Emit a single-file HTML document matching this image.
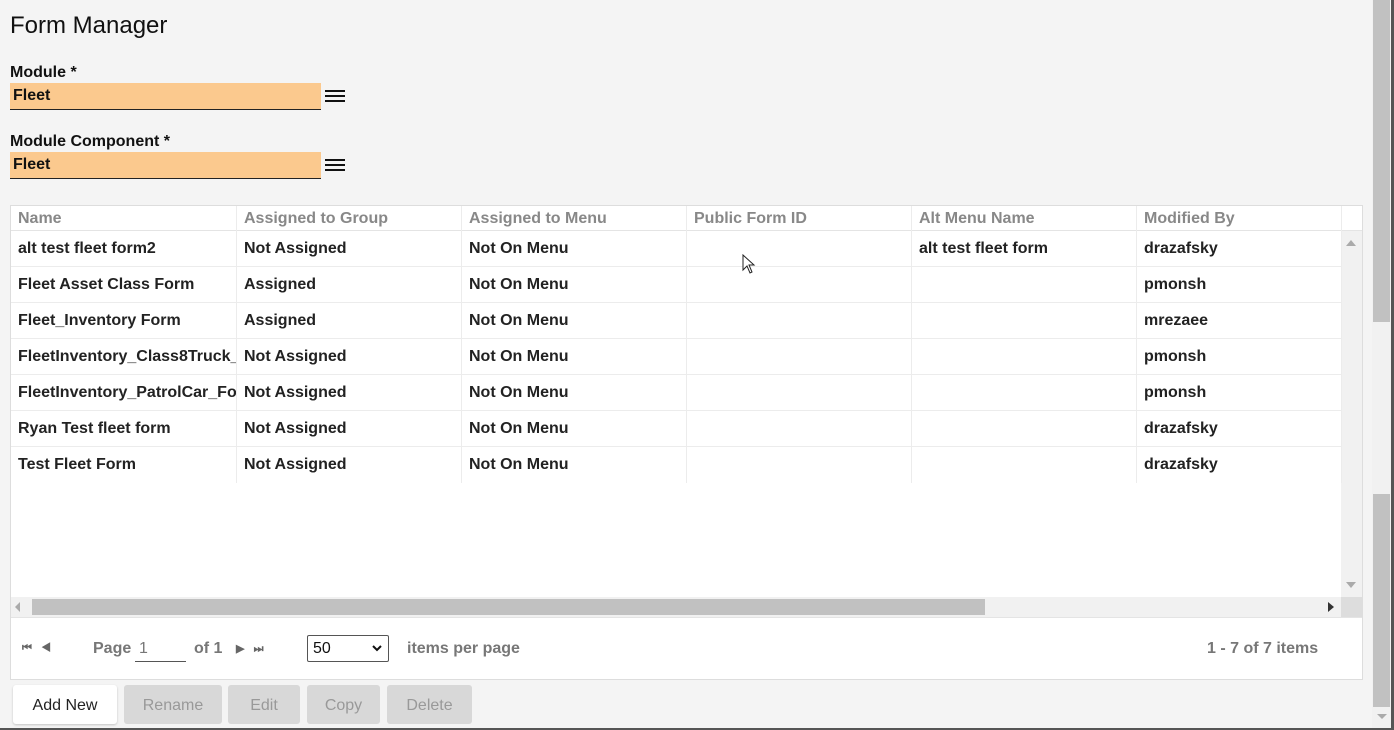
<!DOCTYPE html>
<html><head><meta charset="utf-8"><style>
*{box-sizing:border-box;margin:0;padding:0}
body{width:1394px;height:730px;background:#f4f4f4;font-family:"Liberation Sans",sans-serif;position:relative;overflow:hidden;color:#222}
.abs{position:absolute}
h1{position:absolute;left:10px;top:12px;font-size:24px;font-weight:normal;color:#111}
.lbl{position:absolute;left:10px;font-size:16px;font-weight:bold;color:#111}
.inp{position:absolute;left:10px;width:311px;height:27px;background:#fbc98e;border-bottom:1px solid #222;font-weight:bold;font-size:16px;padding:4px 3px;color:#111}
.ham{position:absolute;left:325px;width:20px}
.ham i{display:block;height:2px;background:#111;margin-bottom:3px}
.tbl{position:absolute;left:10px;top:205px;width:1353px;height:475px;background:#fff;border:1px solid #ddd}
.hdr{position:absolute;top:0;left:0;height:25px;width:1351px;border-bottom:1px solid #e4e4e4}
.c{position:absolute;font-size:16px;font-weight:bold;padding-left:7px;white-space:nowrap;overflow:hidden;border-right:1px solid #ececec}
.hdr .c{color:#888;height:25px;line-height:26px}
.row{position:absolute;left:0;width:1330px;height:36px;border-bottom:1px solid #ececec}
.row.last{border-bottom:0}
.row .c{height:36px;line-height:36px;color:#222}
.btn{position:absolute;top:685px;height:39px;border-radius:3px;font-size:16px;line-height:41px;text-align:center;background:#d8d8d8;color:#999}
.pg{position:absolute;font-size:16px;font-weight:bold;color:#777}
</style></head><body>
<h1>Form Manager</h1>
<div class="lbl" style="top:64px">Module *</div>
<div class="inp" style="top:83px">Fleet</div>
<div class="ham" style="top:90px"><i></i><i></i><i></i></div>
<div class="lbl" style="top:133px">Module Component *</div>
<div class="inp" style="top:152px">Fleet</div>
<div class="ham" style="top:159px"><i></i><i></i><i></i></div>

<div class="tbl">
<div class="hdr">
<div class="c" style="left:0;width:226px">Name</div>
<div class="c" style="left:226px;width:225px">Assigned to Group</div>
<div class="c" style="left:451px;width:225px">Assigned to Menu</div>
<div class="c" style="left:676px;width:225px">Public Form ID</div>
<div class="c" style="left:901px;width:225px">Alt Menu Name</div>
<div class="c" style="left:1126px;width:205px">Modified By</div>
</div>
<div class="abs" style="left:1330px;top:25px;width:21px;height:366px;background:#f1f1f1"></div>
<div class="abs" style="left:1335px;top:34px;width:0;height:0;border:5px solid transparent;border-bottom:6px solid #aaa;border-top:0"></div>
<div class="abs" style="left:1335px;top:376px;width:0;height:0;border:5px solid transparent;border-top:6px solid #aaa;border-bottom:0"></div>
<div class="abs" style="left:0;top:391px;width:1351px;height:20px;background:#f1f1f1"></div>
<div class="abs" style="left:21px;top:393px;width:953px;height:16px;background:#c1c1c1"></div>
<div class="abs" style="left:4px;top:396px;width:0;height:0;border:5px solid transparent;border-right:5px solid #aaa;border-left:0"></div>
<div class="abs" style="left:1317px;top:396px;width:0;height:0;border:5px solid transparent;border-left:6px solid #333;border-right:0"></div>
<div class="abs" style="left:1330px;top:391px;width:21px;height:20px;background:#ddd"></div>
<div class="abs" style="left:0;top:411px;width:1351px;height:1px;background:#e4e4e4"></div>
</div>
<div id="rows"></div>
<div class="pg" style="left:22px;top:642px;font-size:11px;color:#666">⏮&nbsp;&nbsp;&nbsp;◀</div>
<div class="pg" style="left:93px;top:640px">Page</div>
<div class="pg" style="left:135px;top:640px;width:51px;border-bottom:1px solid #555;height:22px;padding-left:4px;font-weight:normal">1</div>
<div class="pg" style="left:194px;top:640px">of 1</div>
<div class="pg" style="left:236px;top:642px;font-size:11px;color:#666">▶&nbsp;&nbsp;&nbsp;⏭</div>
<div class="abs" style="left:307px;top:635px;width:82px;height:27px;border:1px solid #555;border-radius:2px;background:#fff;font-size:16px;padding:4px 5px;color:#111">50<svg style="position:absolute;right:6px;top:9px" width="10" height="7" viewBox="0 0 10 7"><path d="M1 1 L5 5 L9 1" fill="none" stroke="#111" stroke-width="2"/></svg></div>
<div class="pg" style="left:407px;top:640px">items per page</div>
<div class="pg" style="left:1207px;top:640px">1 - 7 of 7 items</div>

<div class="btn" style="left:13px;width:104px;background:#fff;color:#222;box-shadow:0 1px 2px rgba(0,0,0,.2)">Add New</div>
<div class="btn" style="left:124px;width:98px">Rename</div>
<div class="btn" style="left:228px;width:72px">Edit</div>
<div class="btn" style="left:307px;width:73px">Copy</div>
<div class="btn" style="left:387px;width:85px">Delete</div>

<div class="abs" style="left:1372px;top:0;width:19px;height:728px;background:#f1f1f1"></div>
<div class="abs" style="left:1373px;top:0;width:17px;height:322px;background:#c1c1c1"></div>
<div class="abs" style="left:1373px;top:494px;width:17px;height:213px;background:#c1c1c1"></div>
<div class="abs" style="left:1377px;top:714px;width:0;height:0;border:5px solid transparent;border-top:5px solid #aaa;border-bottom:0"></div>
<div class="abs" style="left:1391px;top:0;width:3px;height:730px;background:#555"></div>
<div class="abs" style="left:0;top:728px;width:1394px;height:2px;background:#555"></div>
<svg class="abs" style="left:742px;top:254px" width="14" height="20" viewBox="0 0 14 20"><path d="M1 1 L1 16 L5 12 L8 19 L10 18 L7 11 L12 11 Z" fill="#fff" stroke="#222" stroke-width="1"/></svg>
<script>
var d=[["alt test fleet form2","Not Assigned","Not On Menu","","alt test fleet form","drazafsky"],
["Fleet Asset Class Form","Assigned","Not On Menu","","","pmonsh"],
["Fleet_Inventory Form","Assigned","Not On Menu","","","mrezaee"],
["FleetInventory_Class8Truck_Form","Not Assigned","Not On Menu","","","pmonsh"],
["FleetInventory_PatrolCar_Form","Not Assigned","Not On Menu","","","pmonsh"],
["Ryan Test fleet form","Not Assigned","Not On Menu","","","drazafsky"],
["Test Fleet Form","Not Assigned","Not On Menu","","","drazafsky"]];
var L=[0,226,451,676,901,1126],W=[226,225,225,225,225,205],h="";
d.forEach(function(r,i){h+='<div class="row'+(i==6?' last':'')+'" style="left:11px;top:'+(231+i*36)+'px;position:absolute">';
r.forEach(function(t,j){h+='<div class="c" style="left:'+L[j]+'px;width:'+W[j]+'px">'+t+'</div>'});h+='</div>'});
document.getElementById('rows').innerHTML=h;
</script>
</body></html>
